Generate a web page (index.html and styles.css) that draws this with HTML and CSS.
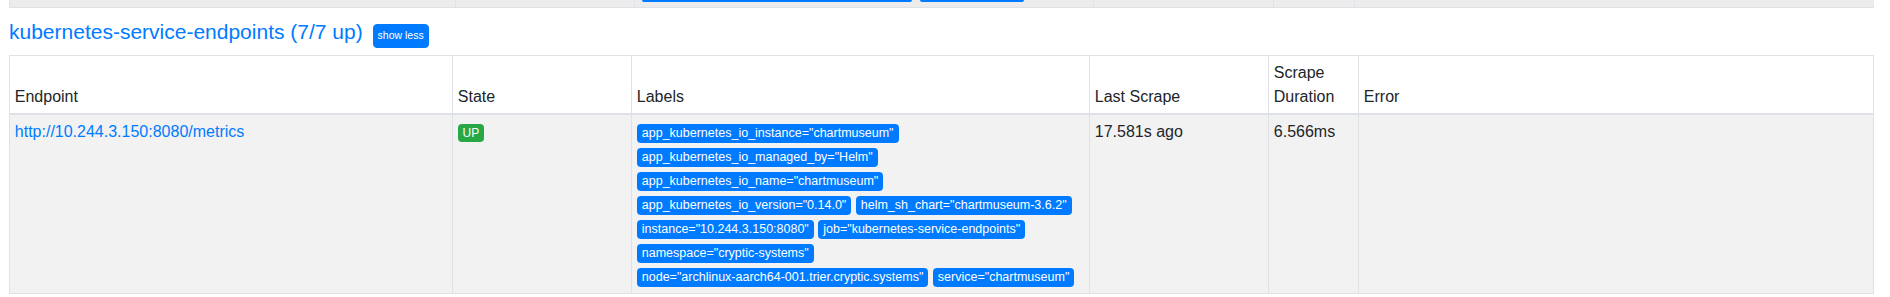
FILE: index.html
```html
<!DOCTYPE html>
<html lang="en">
<head>
  <meta charset="UTF-8">
  <title>Targets</title>
  <link rel="stylesheet" href="styles.css">
</head>
<body>
  <div class="page">
    <div class="prev-tail">
      <div class="tail-cell w1"></div>
      <div class="tail-cell w2"></div>
      <div class="tail-cell w3">
        <span class="tail-tag t1"></span>
        <span class="tail-tag t2"></span>
      </div>
      <div class="tail-cell w4"></div>
      <div class="tail-cell w5"></div>
      <div class="tail-cell w6"></div>
    </div>

    <div class="job">
      <h5 class="job-title">
        <a href="#kubernetes-service-endpoints">kubernetes-service-endpoints (7/7 up)</a>
        <button class="btn-xs">show less</button>
      </h5>

      <table class="targets">
        <colgroup>
          <col class="col-endpoint">
          <col class="col-state">
          <col class="col-labels">
          <col class="col-last">
          <col class="col-duration">
          <col>
        </colgroup>
        <thead>
          <tr>
            <th>Endpoint</th>
            <th>State</th>
            <th>Labels</th>
            <th>Last Scrape</th>
            <th>Scrape Duration</th>
            <th>Error</th>
          </tr>
        </thead>
        <tbody>
          <tr>
            <td><a href="#">http://10.244.3.150:8080/metrics</a></td>
            <td><span class="badge badge-up">UP</span></td>
            <td class="labels">
              <span class="badge badge-label">app_kubernetes_io_instance="chartmuseum"</span>
              <span class="badge badge-label">app_kubernetes_io_managed_by="Helm"</span>
              <span class="badge badge-label">app_kubernetes_io_name="chartmuseum"</span>
              <span class="badge badge-label">app_kubernetes_io_version="0.14.0"</span>
              <span class="badge badge-label">helm_sh_chart="chartmuseum-3.6.2"</span>
              <span class="badge badge-label">instance="10.244.3.150:8080"</span>
              <span class="badge badge-label">job="kubernetes-service-endpoints"</span>
              <span class="badge badge-label">namespace="cryptic-systems"</span>
              <span class="badge badge-label">node="archlinux-aarch64-001.trier.cryptic.systems"</span>
              <span class="badge badge-label">service="chartmuseum"</span>
            </td>
            <td>17.581s ago</td>
            <td>6.566ms</td>
            <td></td>
          </tr>
        </tbody>
      </table>
    </div>
  </div>
</body>
</html>
```
FILE: styles.css
```css
body {
  margin: 0;
  background: #fff;
  color: #212529;
  font-family: "Liberation Sans", Arial, sans-serif;
  font-size: 16px;
  line-height: 1.5;
}
a {
  color: #007bff;
  text-decoration: none;
}
.page {
  padding: 0 16px 0 9px;
}
.prev-tail {
  display: flex;
  height: 7px;
  background: #ececec;
  border-bottom: 1px solid #dee2e6;
  border-left: 1px solid #dee2e6;
}
.tail-cell {
  box-sizing: border-box;
  border-right: 1px solid #dee2e6;
}
.tail-cell.w1 { width: 446px; }
.tail-cell.w2 { width: 179px; }
.tail-cell.w3 { width: 459px; display: flex; gap: 8px; padding-left: 7px; }
.tail-cell.w4 { width: 180px; }
.tail-cell.w5 { width: 81px; }
.tail-cell.w6 { flex: 1; border-right: none; }
.tail-tag {
  display: block;
  height: 2px;
  background: #007bff;
  border-radius: 0 0 3px 3px;
}
.tail-tag.t1 { width: 270px; }
.tail-tag.t2 { width: 104px; }
.job-title {
  margin: 11px 0 7px;
  font-size: 21px;
  font-weight: 400;
  line-height: 1.2;
}
.btn-xs {
  margin-left: 4px;
  padding: 3px 4px;
  font-family: inherit;
  font-size: 10.5px;
  line-height: 1.5;
  color: #fff;
  background: #007bff;
  border: 1px solid #007bff;
  border-radius: 4px;
  vertical-align: baseline;
}
.targets {
  width: 100%;
  table-layout: fixed;
  border-collapse: collapse;
  border: 1px solid #dee2e6;
}
.col-endpoint { width: 443px; }
.col-state { width: 179px; }
.col-labels { width: 458px; }
.col-last { width: 179px; }
.col-duration { width: 90px; }
.targets th,
.targets td {
  padding: 4.8px;
  border: 1px solid #dee2e6;
  text-align: left;
  vertical-align: top;
}
.targets th {
  font-weight: 400;
  vertical-align: bottom;
  border-bottom-width: 2px;
}
.targets tbody tr {
  background: #f2f2f2;
}
.badge {
  display: inline-block;
  padding: 3px 4.8px;
  font-size: 12px;
  line-height: 1;
  color: #fff;
  border-radius: 4px;
  white-space: nowrap;
}
.badge-up {
  background: #28a745;
}
.badge-label {
  font-size: 12.5px;
  padding: 3px 5px;
  background: #007bff;
}
```
